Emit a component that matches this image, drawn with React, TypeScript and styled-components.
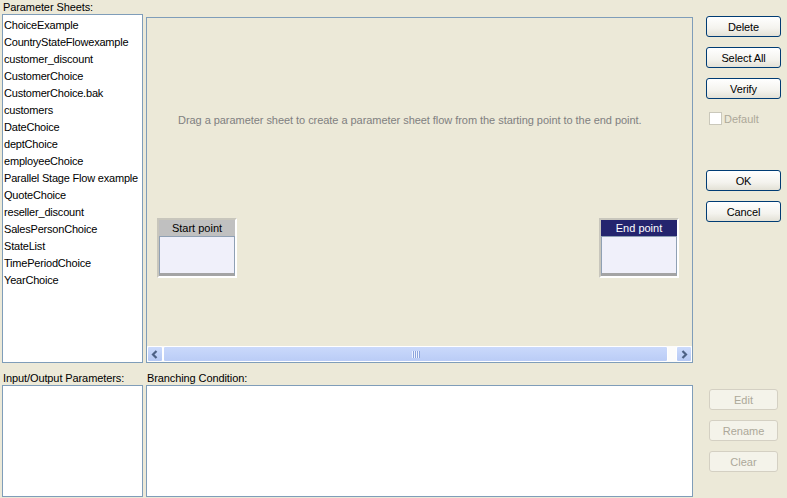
import React from "react";
import styled, { createGlobalStyle } from "styled-components";

const Global = createGlobalStyle`
  html, body { margin: 0; padding: 0; background: #ECE9D8; }
  body { font-family: "Liberation Sans", Tahoma, Arial, sans-serif; font-size: 11px; color: #000; }
`;

const Window = styled.div`
  width: 787px;
  height: 498px;
  background: #ECE9D8;
  display: flex;
  flex-direction: column;
  box-sizing: border-box;
  padding-left: 2px;
  overflow: hidden;
`;

const TopRow = styled.div`
  display: flex;
  height: 363px;
`;

const BottomRow = styled.div`
  display: flex;
  height: 135px;
`;

const Column = styled.div<{ $w: number; $gap?: number }>`
  width: ${(p) => p.$w}px;
  margin-right: ${(p) => p.$gap ?? 0}px;
  display: flex;
  flex-direction: column;
  flex-shrink: 0;
`;

const Label = styled.div<{ $h: number }>`
  height: ${(p) => p.$h}px;
  display: flex;
  align-items: flex-end;
  padding-left: 1px;
  line-height: 13px;
  white-space: nowrap;
  letter-spacing: -0.1px;
`;

const Box = styled.div<{ $h: number }>`
  height: ${(p) => p.$h}px;
  box-sizing: border-box;
  border: 1px solid #7F9DB9;
  background: #fff;
  overflow: hidden;
`;

const ListItem = styled.div`
  height: 17px;
  line-height: 17px;
  padding-left: 1px;
  white-space: nowrap;
  letter-spacing: -0.2px;
`;

const List = styled(Box)`
  padding-top: 2px;
`;

const Canvas = styled.div`
  margin-top: 17px;
  height: 346px;
  box-sizing: border-box;
  border: 1px solid #7F9DB9;
  background: #ECE9D8;
  display: flex;
  flex-direction: column;
`;

const Stage = styled.div`
  position: relative;
  flex: 1;
`;

const Hint = styled.div`
  position: absolute;
  top: 96px;
  left: 31px;
  color: #808080;
  white-space: nowrap;
  letter-spacing: -0.05px;
`;

const Node = styled.div<{ $x?: number; $right?: number }>`
  position: absolute;
  top: 200px;
  ${(p) => (p.$x !== undefined ? `left: ${p.$x}px;` : `right: ${p.$right}px;`)}
  width: 80px;
  height: 60px;
  box-sizing: border-box;
  border: 2px solid;
  border-color: #C8C6BC #FFFFFF #FFFFFF #C8C6BC;
  display: flex;
  flex-direction: column;
`;

const NodeInner = styled.div`
  flex: 1;
  box-sizing: border-box;
  border: 1px solid #8FA0B4;
  border-top: none;
  border-bottom: 3px solid #A4A4A4;
  background: #F0F0FA;
`;

const NodeHead = styled.div<{ $active?: boolean }>`
  height: 16px;
  line-height: 16px;
  text-align: center;
  background: ${(p) => (p.$active ? "#24246E" : "#C0C0C0")};
  color: ${(p) => (p.$active ? "#FFFFFF" : "#000000")};
  border-bottom: 1px solid #8FA0B4;
`;

const ScrollBar = styled.div`
  height: 16px;
  display: flex;
  background: #FCFCFB;
`;

const ScrollBtn = styled.div`
  width: 16px;
  height: 16px;
  box-sizing: border-box;
  border: 1px solid #FFFFFF;
  border-radius: 2px;
  background: linear-gradient(to bottom, #CCDBFC, #B5C8F4);
  display: flex;
  align-items: center;
  justify-content: center;
`;

const Thumb = styled.div`
  flex: 1;
  margin: 0 8px 0 0;
  box-sizing: border-box;
  border: 1px solid #FFFFFF;
  border-radius: 2px;
  background: linear-gradient(to bottom, #CAD9FB, #BACCF6);
  display: flex;
  align-items: center;
  justify-content: center;
`;

const Grip = styled.div`
  width: 8px;
  height: 7px;
  background: repeating-linear-gradient(to right, #EEF3FE 0 1px, #8CA5DE 1px 2px);
`;

const Buttons = styled.div<{ $top: number }>`
  padding-top: ${(p) => p.$top}px;
  display: flex;
  flex-direction: column;
`;

const Button = styled.div<{ $space?: number; $before?: number }>`
  width: 75px;
  height: 21px;
  box-sizing: border-box;
  border: 1px solid #003C74;
  border-radius: 3px;
  background: linear-gradient(to bottom, #FFFFFF 0%, #F4F3EE 60%, #E3E1D6 100%);
  display: flex;
  align-items: center;
  justify-content: center;
  letter-spacing: -0.1px;
  margin-top: ${(p) => p.$before ?? 0}px;
  margin-bottom: ${(p) => p.$space ?? 10}px;
`;

const DisabledButton = styled.div`
  width: 69px;
  height: 21px;
  box-sizing: border-box;
  margin-left: 3px;
  border: 1px solid #D4D0C3;
  border-radius: 3px;
  background: #F4F3EA;
  color: #ACA899;
  display: flex;
  align-items: center;
  justify-content: center;
  margin-bottom: 10px;
`;

const CheckRow = styled.label`
  display: flex;
  align-items: center;
  padding-left: 3px;
  height: 15px;
  margin-top: -1px;
  color: #ACA899;
  gap: 2px;
`;

const CheckBox = styled.span`
  width: 13px;
  height: 13px;
  box-sizing: border-box;
  border: 1px solid #CAC8BB;
  background: #FFFFFF;
`;

const sheets = [
  "ChoiceExample",
  "CountryStateFlowexample",
  "customer_discount",
  "CustomerChoice",
  "CustomerChoice.bak",
  "customers",
  "DateChoice",
  "deptChoice",
  "employeeChoice",
  "Parallel Stage Flow example",
  "QuoteChoice",
  "reseller_discount",
  "SalesPersonChoice",
  "StateList",
  "TimePeriodChoice",
  "YearChoice",
];

const Arrow = ({ dir }: { dir: "left" | "right" }) => (
  <svg width="8" height="9" viewBox="0 0 8 9">
    <path
      d={dir === "left" ? "M5.5 1 L2 4.5 L5.5 8" : "M2.5 1 L6 4.5 L2.5 8"}
      fill="none"
      stroke="#4D6185"
      strokeWidth="2.2"
    />
  </svg>
);

export default function App() {
  return (
    <>
      <Global />
      <Window>
        <TopRow>
          <Column $w={141} $gap={3}>
            <Label $h={14}>Parameter Sheets:</Label>
            <List $h={349}>
              {sheets.map((s) => (
                <ListItem key={s}>{s}</ListItem>
              ))}
            </List>
          </Column>
          <Column $w={547} $gap={13}>
            <Canvas>
              <Stage>
                <Hint>
                  Drag a parameter sheet to create a parameter sheet flow from the starting point to the end point.
                </Hint>
                <Node $x={10}>
                  <NodeHead>Start point</NodeHead>
                  <NodeInner />
                </Node>
                <Node $right={13}>
                  <NodeHead $active>End point</NodeHead>
                  <NodeInner />
                </Node>
              </Stage>
              <ScrollBar>
                <ScrollBtn>
                  <Arrow dir="left" />
                </ScrollBtn>
                <Thumb>
                  <Grip />
                </Thumb>
                <ScrollBtn>
                  <Arrow dir="right" />
                </ScrollBtn>
              </ScrollBar>
            </Canvas>
          </Column>
          <Column $w={75}>
            <Buttons $top={16}>
              <Button>Delete</Button>
              <Button>Select All</Button>
              <Button $space={13}>Verify</Button>
              <CheckRow>
                <CheckBox />
                Default
              </CheckRow>
              <Button $before={44}>OK</Button>
              <Button>Cancel</Button>
            </Buttons>
          </Column>
        </TopRow>
        <BottomRow>
          <Column $w={141} $gap={3}>
            <Label $h={22}>Input/Output Parameters:</Label>
            <Box $h={112} />
          </Column>
          <Column $w={547} $gap={13}>
            <Label $h={22}>Branching Condition:</Label>
            <Box $h={112} />
          </Column>
          <Column $w={75}>
            <Buttons $top={26}>
              <DisabledButton>Edit</DisabledButton>
              <DisabledButton>Rename</DisabledButton>
              <DisabledButton>Clear</DisabledButton>
            </Buttons>
          </Column>
        </BottomRow>
      </Window>
    </>
  );
}
